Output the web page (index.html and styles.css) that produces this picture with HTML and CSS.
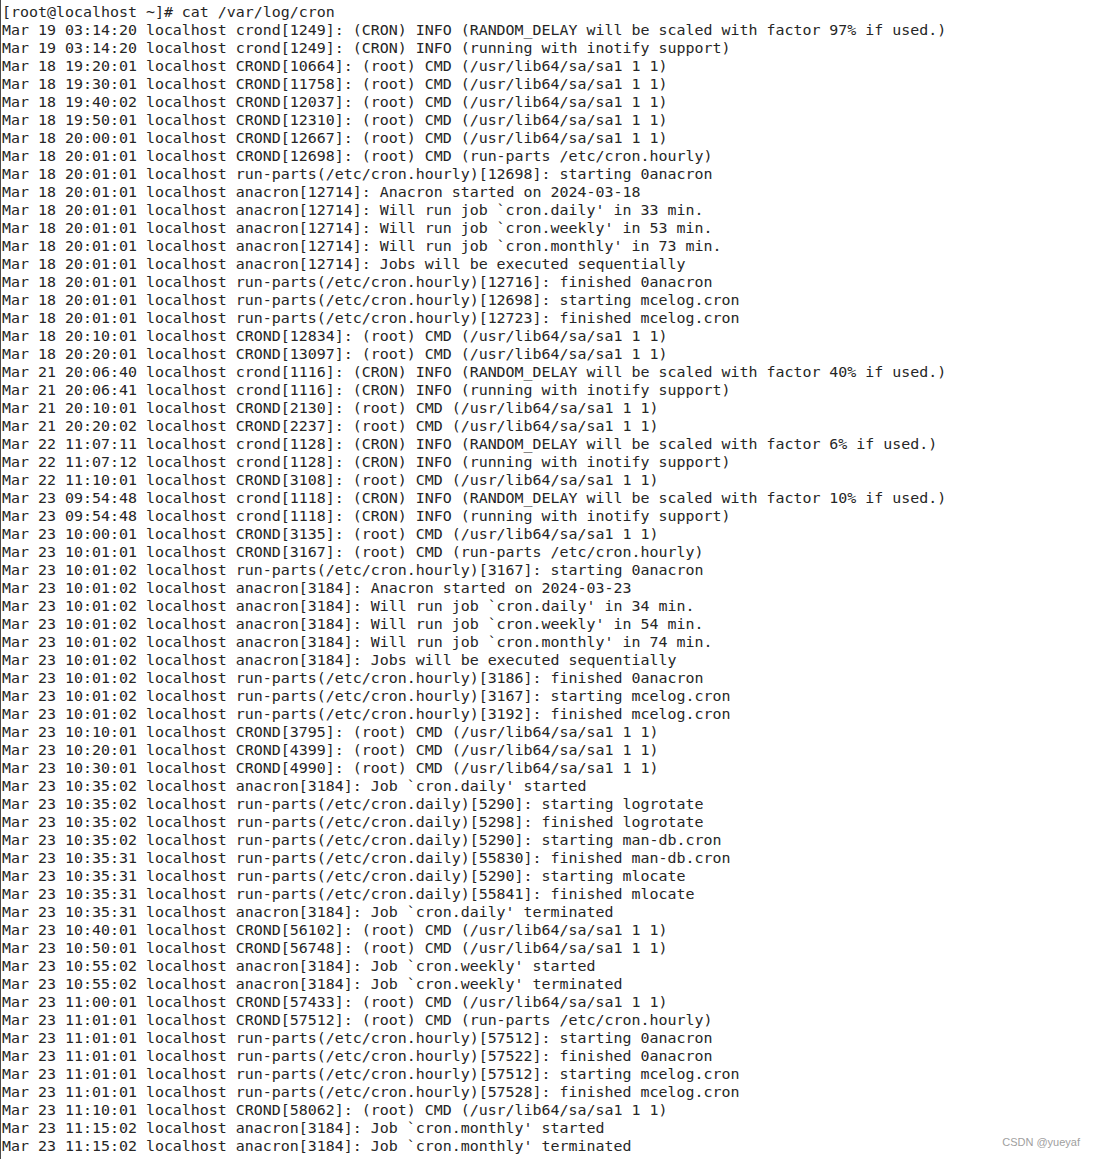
FILE: index.html
```html
<!DOCTYPE html>
<html>
<head>
<meta charset="utf-8">
<link rel="stylesheet" href="styles.css">
</head>
<body>
<div class="term">
<pre class="log">[root@localhost ~]# cat /var/log/cron
Mar 19 03:14:20 localhost crond[1249]: (CRON) INFO (RANDOM_DELAY will be scaled with factor 97% if used.)
Mar 19 03:14:20 localhost crond[1249]: (CRON) INFO (running with inotify support)
Mar 18 19:20:01 localhost CROND[10664]: (root) CMD (/usr/lib64/sa/sa1 1 1)
Mar 18 19:30:01 localhost CROND[11758]: (root) CMD (/usr/lib64/sa/sa1 1 1)
Mar 18 19:40:02 localhost CROND[12037]: (root) CMD (/usr/lib64/sa/sa1 1 1)
Mar 18 19:50:01 localhost CROND[12310]: (root) CMD (/usr/lib64/sa/sa1 1 1)
Mar 18 20:00:01 localhost CROND[12667]: (root) CMD (/usr/lib64/sa/sa1 1 1)
Mar 18 20:01:01 localhost CROND[12698]: (root) CMD (run-parts /etc/cron.hourly)
Mar 18 20:01:01 localhost run-parts(/etc/cron.hourly)[12698]: starting 0anacron
Mar 18 20:01:01 localhost anacron[12714]: Anacron started on 2024-03-18
Mar 18 20:01:01 localhost anacron[12714]: Will run job `cron.daily' in 33 min.
Mar 18 20:01:01 localhost anacron[12714]: Will run job `cron.weekly' in 53 min.
Mar 18 20:01:01 localhost anacron[12714]: Will run job `cron.monthly' in 73 min.
Mar 18 20:01:01 localhost anacron[12714]: Jobs will be executed sequentially
Mar 18 20:01:01 localhost run-parts(/etc/cron.hourly)[12716]: finished 0anacron
Mar 18 20:01:01 localhost run-parts(/etc/cron.hourly)[12698]: starting mcelog.cron
Mar 18 20:01:01 localhost run-parts(/etc/cron.hourly)[12723]: finished mcelog.cron
Mar 18 20:10:01 localhost CROND[12834]: (root) CMD (/usr/lib64/sa/sa1 1 1)
Mar 18 20:20:01 localhost CROND[13097]: (root) CMD (/usr/lib64/sa/sa1 1 1)
Mar 21 20:06:40 localhost crond[1116]: (CRON) INFO (RANDOM_DELAY will be scaled with factor 40% if used.)
Mar 21 20:06:41 localhost crond[1116]: (CRON) INFO (running with inotify support)
Mar 21 20:10:01 localhost CROND[2130]: (root) CMD (/usr/lib64/sa/sa1 1 1)
Mar 21 20:20:02 localhost CROND[2237]: (root) CMD (/usr/lib64/sa/sa1 1 1)
Mar 22 11:07:11 localhost crond[1128]: (CRON) INFO (RANDOM_DELAY will be scaled with factor 6% if used.)
Mar 22 11:07:12 localhost crond[1128]: (CRON) INFO (running with inotify support)
Mar 22 11:10:01 localhost CROND[3108]: (root) CMD (/usr/lib64/sa/sa1 1 1)
Mar 23 09:54:48 localhost crond[1118]: (CRON) INFO (RANDOM_DELAY will be scaled with factor 10% if used.)
Mar 23 09:54:48 localhost crond[1118]: (CRON) INFO (running with inotify support)
Mar 23 10:00:01 localhost CROND[3135]: (root) CMD (/usr/lib64/sa/sa1 1 1)
Mar 23 10:01:01 localhost CROND[3167]: (root) CMD (run-parts /etc/cron.hourly)
Mar 23 10:01:02 localhost run-parts(/etc/cron.hourly)[3167]: starting 0anacron
Mar 23 10:01:02 localhost anacron[3184]: Anacron started on 2024-03-23
Mar 23 10:01:02 localhost anacron[3184]: Will run job `cron.daily' in 34 min.
Mar 23 10:01:02 localhost anacron[3184]: Will run job `cron.weekly' in 54 min.
Mar 23 10:01:02 localhost anacron[3184]: Will run job `cron.monthly' in 74 min.
Mar 23 10:01:02 localhost anacron[3184]: Jobs will be executed sequentially
Mar 23 10:01:02 localhost run-parts(/etc/cron.hourly)[3186]: finished 0anacron
Mar 23 10:01:02 localhost run-parts(/etc/cron.hourly)[3167]: starting mcelog.cron
Mar 23 10:01:02 localhost run-parts(/etc/cron.hourly)[3192]: finished mcelog.cron
Mar 23 10:10:01 localhost CROND[3795]: (root) CMD (/usr/lib64/sa/sa1 1 1)
Mar 23 10:20:01 localhost CROND[4399]: (root) CMD (/usr/lib64/sa/sa1 1 1)
Mar 23 10:30:01 localhost CROND[4990]: (root) CMD (/usr/lib64/sa/sa1 1 1)
Mar 23 10:35:02 localhost anacron[3184]: Job `cron.daily' started
Mar 23 10:35:02 localhost run-parts(/etc/cron.daily)[5290]: starting logrotate
Mar 23 10:35:02 localhost run-parts(/etc/cron.daily)[5298]: finished logrotate
Mar 23 10:35:02 localhost run-parts(/etc/cron.daily)[5290]: starting man-db.cron
Mar 23 10:35:31 localhost run-parts(/etc/cron.daily)[55830]: finished man-db.cron
Mar 23 10:35:31 localhost run-parts(/etc/cron.daily)[5290]: starting mlocate
Mar 23 10:35:31 localhost run-parts(/etc/cron.daily)[55841]: finished mlocate
Mar 23 10:35:31 localhost anacron[3184]: Job `cron.daily' terminated
Mar 23 10:40:01 localhost CROND[56102]: (root) CMD (/usr/lib64/sa/sa1 1 1)
Mar 23 10:50:01 localhost CROND[56748]: (root) CMD (/usr/lib64/sa/sa1 1 1)
Mar 23 10:55:02 localhost anacron[3184]: Job `cron.weekly' started
Mar 23 10:55:02 localhost anacron[3184]: Job `cron.weekly' terminated
Mar 23 11:00:01 localhost CROND[57433]: (root) CMD (/usr/lib64/sa/sa1 1 1)
Mar 23 11:01:01 localhost CROND[57512]: (root) CMD (run-parts /etc/cron.hourly)
Mar 23 11:01:01 localhost run-parts(/etc/cron.hourly)[57512]: starting 0anacron
Mar 23 11:01:01 localhost run-parts(/etc/cron.hourly)[57522]: finished 0anacron
Mar 23 11:01:01 localhost run-parts(/etc/cron.hourly)[57512]: starting mcelog.cron
Mar 23 11:01:01 localhost run-parts(/etc/cron.hourly)[57528]: finished mcelog.cron
Mar 23 11:10:01 localhost CROND[58062]: (root) CMD (/usr/lib64/sa/sa1 1 1)
Mar 23 11:15:02 localhost anacron[3184]: Job `cron.monthly' started
Mar 23 11:15:02 localhost anacron[3184]: Job `cron.monthly' terminated</pre>
</div>
<div class="watermark">CSDN @yueyaf</div>
</body>
</html>
```

FILE: styles.css
```css
html, body {
  margin: 0;
  padding: 0;
  background: #ffffff;
  overflow: hidden;
}

.term {
  border-left: 1px solid #4a4a4a;
  min-height: 1159px;
  padding: 3px 0 0 1px;
  box-sizing: border-box;
}

.log {
  margin: 0;
  font-family: "DejaVu Sans Mono", monospace;
  font-size: 14.95px;
  line-height: 18px;
  color: #262626;
  white-space: pre;
}

.watermark {
  position: absolute;
  right: 15px;
  top: 1136px;
  font-family: "Liberation Sans", Arial, sans-serif;
  font-size: 11px;
  color: #a0a0a0;
}
```
